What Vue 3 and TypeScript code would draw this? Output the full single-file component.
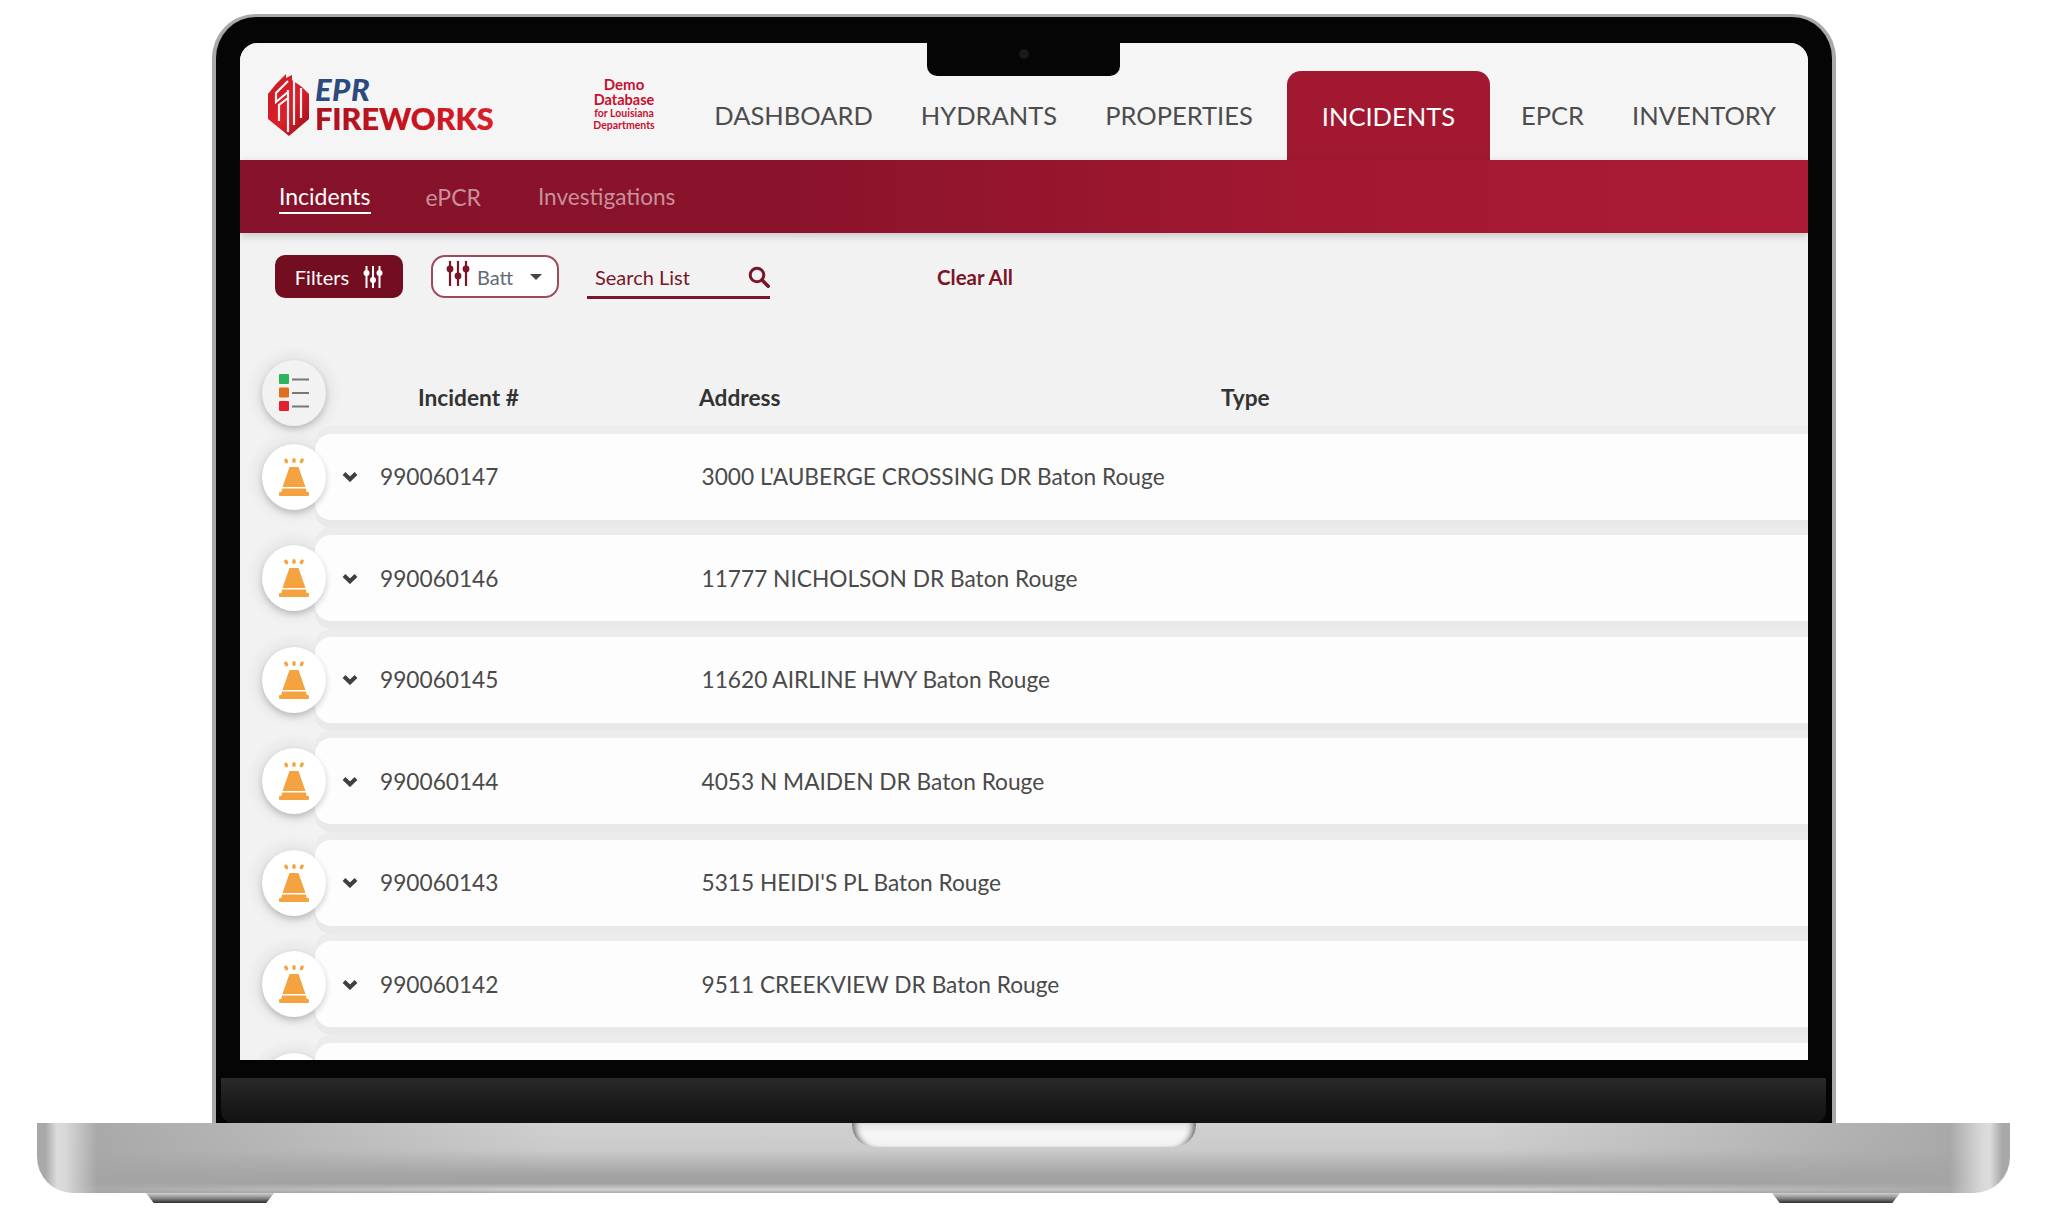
<template>
  <div class="page">
    <div class="laptop">
      <div class="lid">
        <div class="notch"><span class="camera"></span></div>
        <div class="screen">
          <header class="topbar">
            <div class="logo">
              <svg class="logo-mark" viewBox="0 0 41 62" width="41" height="62">
                <defs>
                  <linearGradient id="shield" x1="0" y1="0" x2="1" y2="1">
                    <stop offset="0" stop-color="#c81a24" />
                    <stop offset="0.55" stop-color="#dd1f28" />
                    <stop offset="1" stop-color="#960f1b" />
                  </linearGradient>
                </defs>
                <path d="M18 0 L18 4 L24 1 L24 6 L34 13 L41 20 L41 45 L21 62 L0 45 L0 20 L8 10 Z" fill="url(#shield)" />
                <path d="M20 7 L8 19 L8 28 L20 18 M20 24 L11 31 L11 47 M20 16 L20 58" fill="none" stroke="#f6f5f6" stroke-width="2.200" />
                <path d="M26 6 L26 51 M33 14 L33 44" fill="none" stroke="#f6f5f6" stroke-width="2.200" />
              </svg>
              <div class="logo-words">
                <span class="logo-epr">EPR</span>
                <span class="logo-fire">FIREWORKS</span>
              </div>
            </div>
            <div class="demo">
              <span class="demo-lg">Demo</span>
              <span class="demo-md">Database</span>
              <span class="demo-sm">for Louisiana</span>
              <span class="demo-sm">Departments</span>
            </div>
            <nav class="mainnav">
              <a v-for="item in navItems" :key="item" class="navitem" :class="{ active: item === 'INCIDENTS' }">{{ item }}</a>
            </nav>
          </header>

          <div class="subnav">
            <a class="subitem current">Incidents</a>
            <a class="subitem">ePCR</a>
            <a class="subitem">Investigations</a>
          </div>

          <div class="toolbar">
            <button class="btn-filters">
              Filters
              <svg viewBox="0 0 20 24" width="20" height="24">
                <path d="M3.500 1v22M10 1v22M16.500 1v22" stroke="currentColor" stroke-width="2" />
                <circle cx="3.500" cy="8" r="3" fill="currentColor" />
                <circle cx="10" cy="15" r="3" fill="currentColor" />
                <circle cx="16.500" cy="8" r="3" fill="currentColor" />
              </svg>
            </button>
            <button class="btn-batt">
              <svg class="batt-icon" viewBox="0 0 24 26" width="24" height="26">
                <path d="M4 0v25M12 0v25M20 0v25" stroke="currentColor" stroke-width="2.200" />
                <circle cx="4" cy="8" r="3.400" fill="currentColor" />
                <circle cx="12" cy="15" r="3.400" fill="currentColor" />
                <circle cx="20" cy="8" r="3.400" fill="currentColor" />
              </svg>
              <span class="batt-label">Batt</span>
              <span class="caret"></span>
            </button>
            <div class="search">
              <span>Search List</span>
              <svg viewBox="0 0 22 22" width="22" height="22">
                <circle cx="9" cy="9" r="6.800" fill="none" stroke="currentColor" stroke-width="3" />
                <path d="M14 14l6.200 6.200" stroke="currentColor" stroke-width="3.600" stroke-linecap="round" />
              </svg>
            </div>
            <a class="clear">Clear All</a>
          </div>

          <div class="list">
            <div class="list-head">
              <span class="badge">
                <svg viewBox="0 0 30 38" width="30" height="38">
                  <rect x="0" y="0" width="10" height="10" rx="1" fill="#2db45a" />
                  <rect x="0" y="13.500" width="10" height="10" rx="1" fill="#e06f1f" />
                  <rect x="0" y="27" width="10" height="10" rx="1" fill="#e3202c" />
                  <path d="M13 5.500h17M13 19h17M13 32.500h17" stroke="#777" stroke-width="2" />
                </svg>
              </span>
              <span class="col-num">Incident #</span>
              <span class="col-addr">Address</span>
              <span class="col-type">Type</span>
            </div>
            <div v-for="row in incidents" :key="row.id" class="row">
              <span class="badge white">
                <svg viewBox="0 0 32 38" width="32" height="38">
                  <g fill="#f4a340">
                    <path d="M11.500 9h9l7 20H4.500z" />
                    <path d="M4.200 30.500h23.600l1 4H3.200z" />
                    <rect x="1" y="34" width="30" height="4" rx="1" />
                    <rect x="6.500" y="0.500" width="3.400" height="5" rx="1.700" transform="rotate(-25 8 3)" />
                    <rect x="14.300" y="0" width="3.400" height="5" rx="1.700" />
                    <rect x="22" y="0.500" width="3.400" height="5" rx="1.700" transform="rotate(25 24 3)" />
                  </g>
                </svg>
              </span>
              <div class="row-body">
                <svg class="chev" viewBox="0 0 16 11" width="16" height="11">
                  <path d="M2 2.500l6 5.800 6-5.800" fill="none" stroke="#3c4043" stroke-width="4" />
                </svg>
                <span class="num">{{ row.id }}</span>
                <span>{{ row.address }}</span>
              </div>
            </div>
            <div class="row">
              <span class="badge white"></span>
              <div class="row-body"></div>
            </div>
          </div>
        </div>
        <div class="chin"></div>
        <div class="lid-foot"></div>
      </div>
      <div class="base">
        <div class="hinge"></div>
      </div>
      <div class="feet">
        <span class="foot"></span>
        <span class="foot"></span>
      </div>
    </div>
  </div>
</template>

<script setup lang="ts">
const navItems: string[] = ['DASHBOARD', 'HYDRANTS', 'PROPERTIES', 'INCIDENTS', 'EPCR', 'INVENTORY']

const incidents: { id: string; address: string }[] = [
  { id: '990060147', address: "3000 L'AUBERGE CROSSING DR Baton Rouge" },
  { id: '990060146', address: '11777 NICHOLSON DR Baton Rouge' },
  { id: '990060145', address: '11620 AIRLINE HWY Baton Rouge' },
  { id: '990060144', address: '4053 N MAIDEN DR Baton Rouge' },
  { id: '990060143', address: "5315 HEIDI'S PL Baton Rouge" },
  { id: '990060142', address: '9511 CREEKVIEW DR Baton Rouge' }
]
</script>

<style>
html,
body {
  margin: 0;
  background: #fff;
}
</style>

<style scoped>
.page {
  width: 2048px;
  height: 1215px;
  overflow: hidden;
  background: #fff;
  font-family: Lato, "Liberation Sans", sans-serif;
}
.laptop {
  width: 1973px;
  margin-left: 37px;
  padding-top: 14px;
}
.lid {
  position: relative;
  width: 1616px;
  margin-left: 175px;
  padding: 26px 0 0;
  background: #050505;
  border: 4px solid #a9a9a9;
  border-bottom: 0;
  border-top-width: 3px;
  border-radius: 44px 44px 0 0;
}
.notch {
  position: absolute;
  top: 26px;
  left: 711px;
  width: 193px;
  height: 33px;
  background: #050505;
  border-radius: 0 0 10px 10px;
  z-index: 5;
  display: flex;
  justify-content: center;
  padding-top: 3px;
  box-sizing: border-box;
}
.camera {
  width: 10px;
  height: 10px;
  margin-top: 3px;
  border-radius: 50%;
  background: #161a1d;
}
.screen {
  width: 1568px;
  height: 1017px;
  margin: 0 24px;
  overflow: hidden;
  background: #f2f2f2;
  border-radius: 18px 18px 0 0;
}
.chin {
  height: 18px;
}
.lid-foot {
  height: 45px;
  margin: 0 6px 0 5px;
  background: linear-gradient(#2a2a2a, #1c1c1c 50%, #111);
  border-radius: 0 0 12px 12px;
}

/* header */
.topbar {
  display: flex;
  align-items: flex-end;
  height: 117px;
  padding-left: 28px;
  background: #f6f5f6;
  box-sizing: border-box;
}
.logo {
  display: flex;
  align-items: center;
  gap: 6px;
  width: 227px;
  margin-bottom: 24px;
}
.logo-mark {
  flex: none;
}
.logo-words {
  display: flex;
  flex-direction: column;
}
.logo-epr {
  height: 27px;
  font-size: 31px;
  line-height: 27px;
  font-weight: 900;
  font-style: italic;
  letter-spacing: 0.5px;
  color: #2c4a7e;
}
.logo-fire {
  font-size: 30.600px;
  line-height: 32px;
  font-weight: 900;
  white-space: nowrap;
  color: transparent;
  background: linear-gradient(90deg, #a8141f, #c8141f 55%, #dc1f28);
  -webkit-background-clip: text;
  background-clip: text;
  -webkit-text-stroke: 0.2px #b5141f;
}
.demo {
  display: flex;
  flex-direction: column;
  align-items: center;
  width: 62px;
  margin: 0 0 30px 98px;
  color: #c8102e;
  font-weight: 700;
  line-height: 1;
}
.demo-lg {
  font-size: 15px;
}
.demo-md {
  font-size: 14.500px;
  margin-top: 1px;
}
.demo-sm {
  font-size: 10.500px;
  margin-top: 1px;
  white-space: nowrap;
}
.mainnav {
  display: flex;
  margin-left: auto;
  padding-right: 8px;
}
.navitem {
  display: flex;
  align-items: center;
  box-sizing: border-box;
  height: 89px;
  padding: 0 24px 2px;
  font-size: 25.500px;
  color: #4d4d4d;
  white-space: nowrap;
}
.navitem.active {
  margin: 0 7px 0 10px;
  padding: 0 35px;
  color: #fff;
  background: #a31831;
  border-radius: 14px 14px 0 0;
}
.subnav {
  position: relative;
  display: flex;
  align-items: center;
  gap: 55px;
  height: 73px;
  padding-left: 39px;
  background: linear-gradient(90deg, #85122a, #8a132b 35%, #a31831 70%, #ac1b36);
  box-shadow: 0 3px 8px rgba(0, 0, 0, 0.18);
}
.subitem {
  position: relative;
  font-size: 23px;
  color: #cb8f9c;
}
.subitem:last-child {
  margin-left: 2px;
  font-size: 22.600px;
}
.subitem.current {
  color: #fff;
  top: -1px;
}
.subitem.current::after {
  content: '';
  position: absolute;
  left: 0;
  right: 0;
  bottom: -4px;
  height: 2px;
  background: #fff;
}

/* filters */
.toolbar {
  display: flex;
  align-items: center;
  height: 43px;
  margin: 22px 0 0 35px;
  font-size: 20px;
}
.toolbar button {
  display: flex;
  align-items: center;
  box-sizing: border-box;
  width: 128px;
  height: 43px;
  padding: 0;
  font: inherit;
}
.btn-filters {
  justify-content: center;
  gap: 14px;
  color: #fff;
  background: #730d20;
  border: 0;
  border-radius: 10px;
}
.btn-batt {
  margin-left: 28px;
  padding-left: 13px !important;
  color: #7a1528;
  background: #fff;
  border: 2px solid #a04a58;
  border-radius: 14px;
}
.batt-icon {
  margin-bottom: 5px;
}
.batt-label {
  margin-left: 7px;
  color: #5f6b78;
}
.caret {
  margin-left: 17px;
  border: 6px solid transparent;
  border-top-color: #444;
  border-bottom: 0;
}
.search {
  display: flex;
  align-items: center;
  justify-content: space-between;
  box-sizing: border-box;
  width: 183px;
  height: 44px;
  margin: 1px 0 0 28px;
  padding: 2px 0 0 8px;
  color: #7a1528;
  font-size: 20px;
  border-bottom: 3px solid #7a1528;
}
.clear {
  margin-left: 167px;
  color: #7a1528;
  font-size: 20.500px;
  font-weight: 700;
}

/* incident list */
.list {
  margin-top: 61.500px;
  font-size: 22.700px;
  color: #4a4a4a;
}
.list-head,
.row {
  position: relative;
  display: flex;
}
.list-head {
  align-items: center;
  height: 66px;
  margin-bottom: 8px;
  color: #333;
  font-weight: 700;
}
.list-head::before,
.row::before {
  content: '';
  position: absolute;
  left: 6px;
  top: 50%;
  width: 96px;
  height: 96px;
  margin-top: -48px;
  border-radius: 50%;
  background: radial-gradient(closest-side, #e6e6e6 62%, #ececec 82%, rgba(242, 242, 242, 0));
}
.badge {
  position: relative;
  z-index: 2;
  flex: none;
  display: flex;
  align-items: center;
  justify-content: center;
  width: 64px;
  height: 66px;
  margin-left: 22px;
  border-radius: 50%;
  background: #f2f2f2;
  box-shadow: 0 3px 6px rgba(0, 0, 0, 0.2);
}
.badge.white {
  align-self: center;
  background: #fff;
}
.col-num {
  position: relative;
  width: 281px;
  margin: 10px 0 0 92px;
}
.col-addr {
  position: relative;
  width: 522px;
  margin-top: 10px;
}
.col-type {
  position: relative;
  margin-top: 10px;
}
.row {
  align-items: stretch;
  margin-bottom: 15.600px;
}
.row-body {
  position: relative;
  z-index: 1;
  flex: 1;
  display: flex;
  align-items: center;
  height: 86px;
  margin-left: -11px;
  padding-left: 27px;
  background: #fdfdfd;
  border-radius: 16px 0 0 16px;
  box-shadow: 0 8px 0 #e9e9e9, 0 -8px 0 #ececec;
}
.chev {
  flex: none;
}
.num {
  width: 321.500px;
  margin-left: 22px;
}

/* base of the laptop */
.base {
  position: relative;
  height: 70px;
  border-radius: 0 0 36px 36px;
  background:
    linear-gradient(90deg, #a8a8a8 0, #a8a8a8 8px, #dcdcdc 20px, #d8d8d8 28px, rgba(165, 165, 165, 0.9) 60px, rgba(165, 165, 165, 0) 520px, rgba(165, 165, 165, 0) calc(100% - 520px), rgba(165, 165, 165, 0.9) calc(100% - 60px), #d8d8d8 calc(100% - 28px), #dcdcdc calc(100% - 20px), #a8a8a8 calc(100% - 8px), #a8a8a8 100%),
    linear-gradient(#d0d0d0, #cbcbcb 38%, #a6a6a6 72%, #9f9f9f 86%, #cfcfcf 95%, #ababab);
}
.hinge {
  position: absolute;
  top: 0;
  left: 815px;
  width: 344px;
  height: 24px;
  border-radius: 0 0 22px 22px;
  background: linear-gradient(#e6e6e6, #f6f6f6 45%, #f2f2f2);
  box-shadow: inset 8px 0 6px -5px #666, inset -8px 0 6px -5px #666;
}
.feet {
  display: flex;
  justify-content: space-between;
  padding: 0 110px 0 109px;
}
.foot {
  width: 128px;
  height: 10px;
  background: linear-gradient(#d0d0d0, #8a8a8a 50%, #2f2f2f);
  clip-path: polygon(0 0, 100% 0, 94% 100%, 6% 100%);
}
</style>
